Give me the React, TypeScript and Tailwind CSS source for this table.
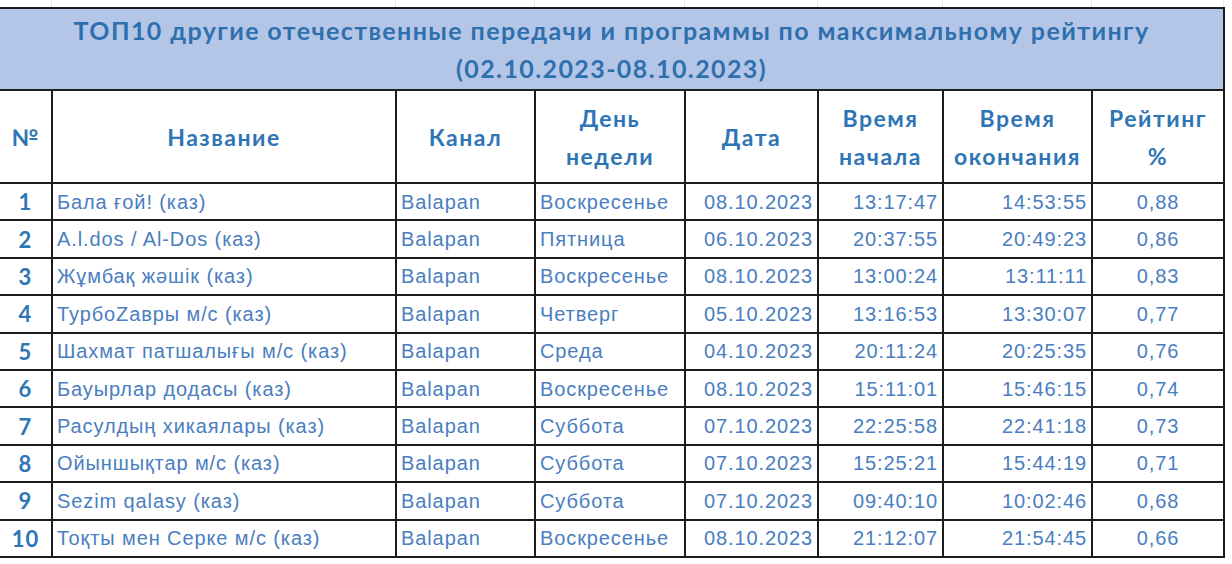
const ROWS = [
  ["1", "Бала ғой! (каз)", "Balapan", "Воскресенье", "08.10.2023", "13:17:47", "14:53:55", "0,88"],
  ["2", "A.l.dos / Al-Dos (каз)", "Balapan", "Пятница", "06.10.2023", "20:37:55", "20:49:23", "0,86"],
  ["3", "Жұмбақ жәшік (каз)", "Balapan", "Воскресенье", "08.10.2023", "13:00:24", "13:11:11", "0,83"],
  ["4", "ТурбоZавры м/с (каз)", "Balapan", "Четверг", "05.10.2023", "13:16:53", "13:30:07", "0,77"],
  ["5", "Шахмат патшалығы м/с (каз)", "Balapan", "Среда", "04.10.2023", "20:11:24", "20:25:35", "0,76"],
  ["6", "Бауырлар додасы (каз)", "Balapan", "Воскресенье", "08.10.2023", "15:11:01", "15:46:15", "0,74"],
  ["7", "Расулдың хикаялары (каз)", "Balapan", "Суббота", "07.10.2023", "22:25:58", "22:41:18", "0,73"],
  ["8", "Ойыншықтар м/с (каз)", "Balapan", "Суббота", "07.10.2023", "15:25:21", "15:44:19", "0,71"],
  ["9", "Sezim qalasy (каз)", "Balapan", "Суббота", "07.10.2023", "09:40:10", "10:02:46", "0,68"],
  ["10", "Тоқты мен Серке м/с (каз)", "Balapan", "Воскресенье", "08.10.2023", "21:12:07", "21:54:45", "0,66"],
];

const WIDTHS = [52, 344, 139, 150, 133, 125, 149, 132];

const HEAD = "font-['Lato',sans-serif] font-bold text-[23px] tracking-[1.5px] leading-[38px] text-[#2e75b6] text-center";
const CELL = "border-2 border-[#1c1c1c] px-[4px] font-['Liberation_Sans',Arial,sans-serif] text-[20px] tracking-[0.9px] text-[#4a7ebf] whitespace-nowrap";

export default function App() {
  return (
    <div className="w-[1232px] h-[564px] bg-white overflow-hidden">
      <div className="h-[7px] flex">
        {WIDTHS.map((w, i) => (
          <div key={i} style={{ width: w }} className="border-r border-gray-200" />
        ))}
      </div>
      <table className="table-fixed border-collapse w-[1225px]">
        <colgroup>
          {WIDTHS.map((w, i) => (
            <col key={i} style={{ width: w }} />
          ))}
        </colgroup>
        <thead>
          <tr className="h-[82px]">
            <th colSpan={8} className="border-2 border-l-0 border-[#1c1c1c] bg-[#b4c6e7] font-['Lato',sans-serif] font-bold text-[25px] tracking-[1.4px] leading-[38px] text-[#2e6fad] text-center whitespace-nowrap">
              ТОП10 другие отечественные передачи и программы по максимальному рейтингу
              <br />
              (02.10.2023-08.10.2023)
            </th>
          </tr>
          <tr className="h-[93px]">
            <th className={`border-2 border-l-0 border-[#1c1c1c] ${HEAD}`}>№</th>
            <th className={`border-2 border-[#1c1c1c] ${HEAD}`}>Название</th>
            <th className={`border-2 border-[#1c1c1c] ${HEAD}`}>Канал</th>
            <th className={`border-2 border-[#1c1c1c] ${HEAD}`}>
              День
              <br />
              недели
            </th>
            <th className={`border-2 border-[#1c1c1c] ${HEAD}`}>Дата</th>
            <th className={`border-2 border-[#1c1c1c] ${HEAD}`}>
              Время
              <br />
              начала
            </th>
            <th className={`border-2 border-[#1c1c1c] ${HEAD} tracking-[0.6px]`}>
              Время
              <br />
              окончания
            </th>
            <th className={`border-2 border-[#1c1c1c] ${HEAD}`}>
              Рейтинг
              <br />%
            </th>
          </tr>
        </thead>
        <tbody>
          {ROWS.map((r) => (
            <tr key={r[0]} className="h-[37.4px]">
              <td className="border-2 border-l-0 border-[#1c1c1c] font-['Lato',sans-serif] font-bold text-[22px] tracking-[1px] text-[#2e75b6] text-center">
                {r[0]}
              </td>
              <td className={`${CELL} text-left`}>{r[1]}</td>
              <td className={`${CELL} text-left`}>{r[2]}</td>
              <td className={`${CELL} text-left`}>{r[3]}</td>
              <td className={`${CELL} text-right`}>{r[4]}</td>
              <td className={`${CELL} text-right`}>{r[5]}</td>
              <td className={`${CELL} text-right`}>{r[6]}</td>
              <td className={`${CELL} text-center`}>{r[7]}</td>
            </tr>
          ))}
        </tbody>
      </table>
    </div>
  );
}
